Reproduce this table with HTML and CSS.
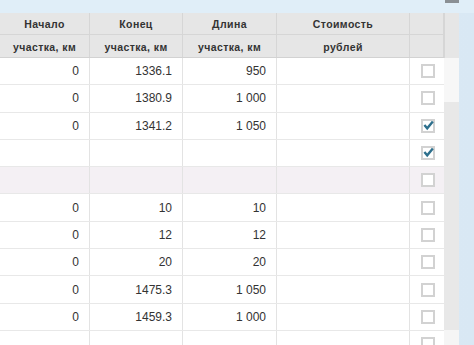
FILE: index.html
```html
<!DOCTYPE html>
<html lang="ru">
<head>
<meta charset="utf-8">
<title>Участки</title>
<link rel="stylesheet" href="styles.css">
</head>
<body>
<div class="topbar"><div class="grip"></div></div>
<div class="main">
  <div class="grid">
    <div class="hrow">
      <div class="hc">Начало</div><div class="hc">Конец</div><div class="hc">Длина</div><div class="hc">Стоимость</div><div class="hc"></div>
    </div>
    <div class="hrow hrow2">
      <div class="hc">участка, км</div><div class="hc">участка, км</div><div class="hc">участка, км</div><div class="hc">рублей</div><div class="hc"></div>
    </div>
    <div class="row"><div class="c">0</div><div class="c">1336.1</div><div class="c">950</div><div class="c"></div><div class="c cb"><span class="box"></span></div></div>
    <div class="row"><div class="c">0</div><div class="c">1380.9</div><div class="c">1 000</div><div class="c"></div><div class="c cb"><span class="box"></span></div></div>
    <div class="row"><div class="c">0</div><div class="c">1341.2</div><div class="c">1 050</div><div class="c"></div><div class="c cb"><span class="box"><svg viewBox="0 0 12 12" class="tick"><path d="M2.2 5.6 L4.8 8.6 L10 2.2" /></svg></span></div></div>
    <div class="row"><div class="c"></div><div class="c"></div><div class="c"></div><div class="c"></div><div class="c cb"><span class="box"><svg viewBox="0 0 12 12" class="tick"><path d="M2.2 5.6 L4.8 8.6 L10 2.2" /></svg></span></div></div>
    <div class="row pink"><div class="c"></div><div class="c"></div><div class="c"></div><div class="c"></div><div class="c cb"><span class="box"></span></div></div>
    <div class="row"><div class="c">0</div><div class="c">10</div><div class="c">10</div><div class="c"></div><div class="c cb"><span class="box"></span></div></div>
    <div class="row"><div class="c">0</div><div class="c">12</div><div class="c">12</div><div class="c"></div><div class="c cb"><span class="box"></span></div></div>
    <div class="row"><div class="c">0</div><div class="c">20</div><div class="c">20</div><div class="c"></div><div class="c cb"><span class="box"></span></div></div>
    <div class="row"><div class="c">0</div><div class="c">1475.3</div><div class="c">1 050</div><div class="c"></div><div class="c cb"><span class="box"></span></div></div>
    <div class="row"><div class="c">0</div><div class="c">1459.3</div><div class="c">1 000</div><div class="c"></div><div class="c cb"><span class="box"></span></div></div>
    <div class="row"><div class="c"></div><div class="c"></div><div class="c"></div><div class="c"></div><div class="c cb"><span class="box"></span></div></div>
  </div>
  <div class="scroll">
    <div class="s-head"></div>
    <div class="s-thumb"></div>
    <div class="s-track"></div>
    <div class="s-end"></div>
  </div>
</div>
</body>
</html>
```
FILE: styles.css
```css
html, body {
  margin: 0;
  padding: 0;
}
body {
  width: 474px;
  height: 345px;
  overflow: hidden;
  background: linear-gradient(to right, #dfedf7, #d9e8f4);
  font-family: "Liberation Sans", Arial, sans-serif;
  color: #333;
  display: flex;
  flex-direction: column;
}
.topbar {
  height: 13px;
  flex: none;
  background: #e0eef8;
  display: flex;
  justify-content: flex-end;
  padding-right: 15px;
}
.grip {
  width: 14px;
  height: 3px;
  background: #8a8f94;
}
.main {
  display: flex;
  flex: 1;
  min-height: 0;
  overflow: hidden;
}
.grid {
  width: 444px;
  flex: none;
  background: #fff;
}
.hrow, .row {
  display: grid;
  grid-template-columns: 90px 93px 94px 133px 34px;
}
.hrow {
  height: 22px;
  background: #e6e6e6;
  border-bottom: 1px solid #d6d6d6;
  box-sizing: border-box;
}
.hrow2 {
  height: 23px;
  border-bottom: 1px solid #d2d2d2;
}
.hc {
  border-right: 1px solid #d6d6d6;
  display: flex;
  align-items: center;
  justify-content: center;
  padding-top: 1px;
  font-weight: bold;
  font-size: 10.5px;
  letter-spacing: 0.4px;
  color: #333;
}
.row {
  height: 27.3px;
  border-bottom: 1px solid #e8e8e8;
  box-sizing: border-box;
}
.row.pink {
  background: #f4f0f4;
}
.c {
  border-right: 1px solid #e3e3e3;
  display: flex;
  align-items: center;
  justify-content: flex-end;
  padding-right: 10px;
  font-size: 12px;
}
.c.cb {
  justify-content: center;
  padding-right: 0;
  border-right: none;
}
.box {
  width: 14px;
  height: 14px;
  box-sizing: border-box;
  border: 2px solid #d2d2d2;
  background: #fff;
  position: relative;
  margin-left: 1px;
}
.tick {
  position: absolute;
  left: -1px;
  top: -2px;
  width: 13px;
  height: 13px;
  fill: none;
  stroke: #2d6f8c;
  stroke-width: 2.2;
}
.scroll {
  width: 15px;
  flex: none;
  display: flex;
  flex-direction: column;
}
.s-head {
  height: 45px;
  background: #e6e6e6;
  border-left: 1px solid #d6d6d6;
  box-sizing: border-box;
}
.s-thumb {
  height: 44px;
  background: #f7f7f7;
}
.s-track {
  flex: 1;
  background: #e8e8e8;
}
.s-end {
  height: 15px;
  background: #f5f5f5;
}
```
